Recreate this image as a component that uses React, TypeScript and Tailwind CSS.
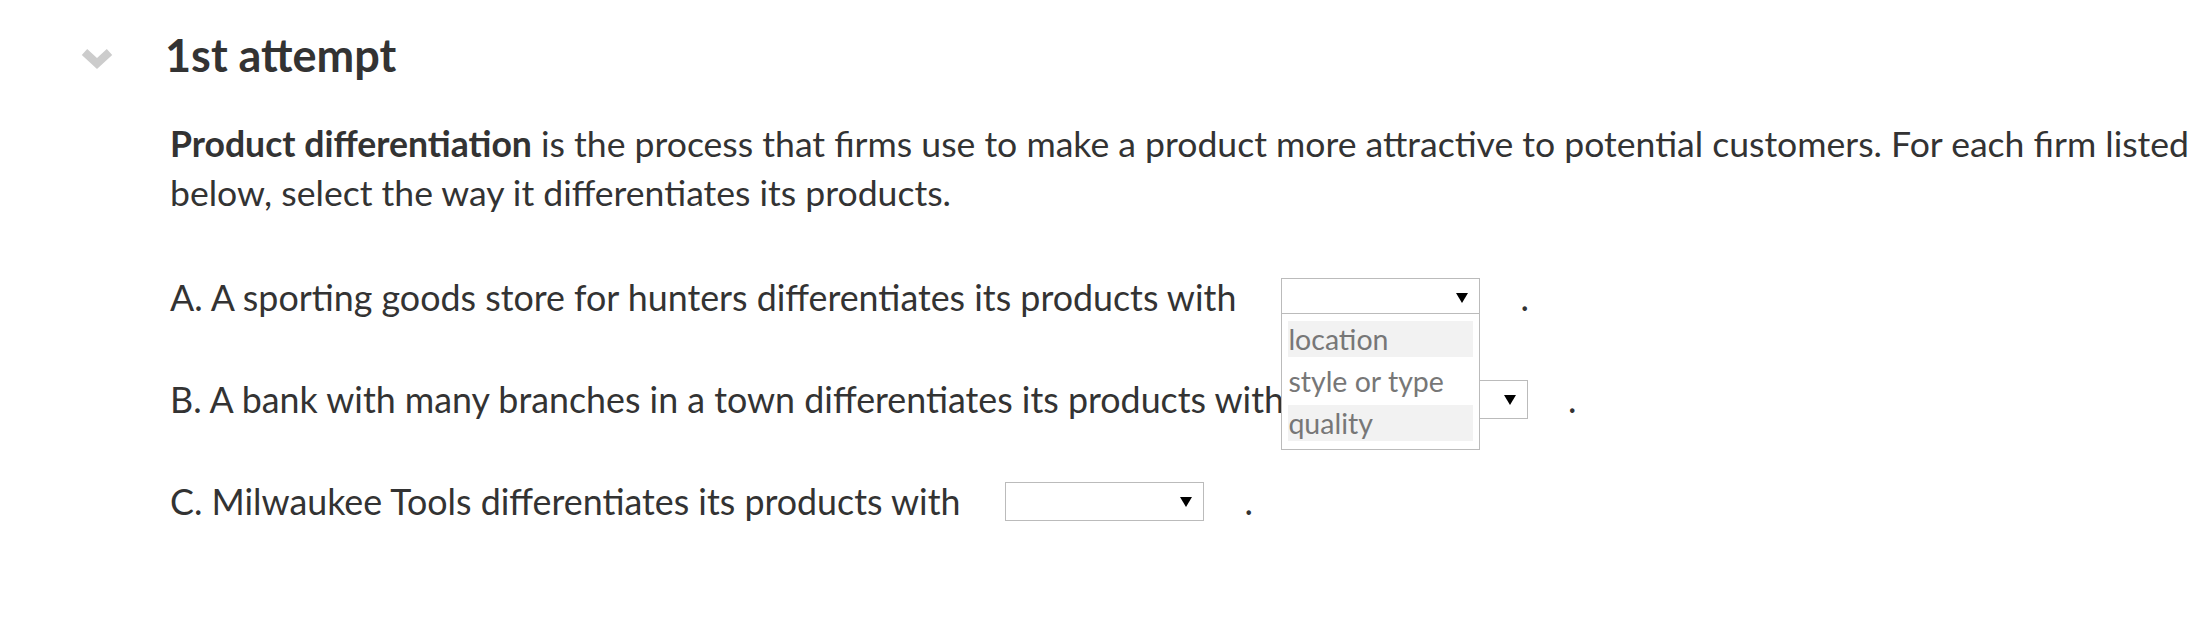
import React from "react";

function Arrow() {
  return (
    <svg width="12" height="10" viewBox="0 0 12 10">
      <polygon points="0,0 12,0 6,10" fill="#000000" />
    </svg>
  );
}

function Select({ open = false }: { open?: boolean }) {
  return (
    <div className="relative ml-[45px] shrink-0">
      <div className="w-[199px] h-[39px] border border-[#bbbbbb] bg-white flex items-center justify-end pr-[11px]">
        <Arrow />
      </div>
      {open && (
        <div className="absolute left-0 top-[35px] z-10 w-[199px] border border-[#bbbbbb] bg-white px-[6px] pt-[7px] pb-[8px] flex flex-col gap-[6px]">
          <div className="h-[36px] bg-[#f2f2f2] text-[28.5px] leading-[36px] text-[#777777] whitespace-nowrap">location</div>
          <div className="h-[36px] text-[28.5px] leading-[36px] text-[#777777] whitespace-nowrap">style or type</div>
          <div className="h-[36px] bg-[#f2f2f2] text-[28.5px] leading-[36px] text-[#777777] whitespace-nowrap">quality</div>
        </div>
      )}
    </div>
  );
}

function Row({ text, open }: { text: string; open?: boolean }) {
  return (
    <div className="flex items-center h-[39px]">
      <span className="whitespace-nowrap text-[35.8px] leading-[40px]">{text}</span>
      <Select open={open} />
      <span className="ml-[40px] text-[35.8px] leading-[40px]">.</span>
    </div>
  );
}

export default function App() {
  return (
    <div
      className="w-full h-[634px] bg-white text-[#333333] overflow-hidden"
      style={{ fontFamily: "Lato, 'Open Sans', sans-serif" }}
    >
      <div className="flex pl-[81px] pt-[28px]">
        <div className="w-[87px] shrink-0 pt-[20px]">
          <svg width="32" height="22" viewBox="0 0 32 22">
            <polyline
              points="3.5,4 16,15.5 28.5,4"
              fill="none"
              stroke="#cccccc"
              strokeWidth="8"
              strokeLinejoin="miter"
            />
          </svg>
        </div>
        <div className="flex-1 min-w-0">
          <h2 className="-ml-[3px] text-[45px] leading-[54px] font-bold text-[#333333]">1st attempt</h2>
          <p className="mt-[37px] text-[35.6px] leading-[49px] pl-[2px]">
            <b className="font-bold">Product differentiation</b> is the process that firms use to make a product more
            attractive to potential customers. For each firm listed below, select the way it differentiates its products.
          </p>
          <div className="mt-[61px] flex flex-col gap-[63px] pl-[2px]">
            <Row text="A. A sporting goods store for hunters differentiates its products with" open />
            <Row text="B. A bank with many branches in a town differentiates its products with" />
            <Row text="C. Milwaukee Tools differentiates its products with" />
          </div>
        </div>
      </div>
    </div>
  );
}
